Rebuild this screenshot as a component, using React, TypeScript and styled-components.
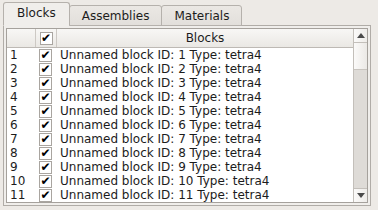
import styled, { createGlobalStyle } from 'styled-components';

const GlobalStyle = createGlobalStyle`
  html, body {
    margin: 0;
    padding: 0;
    background: #edeae6;
  }
  * {
    box-sizing: border-box;
  }
  body {
    font-family: 'DejaVu Sans', 'Liberation Sans', sans-serif;
    font-size: 12px;
    color: #1c1c1c;
  }
`;

const Window = styled.div`
  width: 378px;
  height: 210px;
  padding: 2px 7px 0 3px;
  display: flex;
  flex-direction: column;
  overflow: hidden;
`;

const TabBar = styled.div`
  display: flex;
  align-items: flex-end;
  height: 24px;
  position: relative;
  z-index: 1;
  margin-bottom: -1px;
`;

const Tab = styled.div<{ $active?: boolean }>`
  height: ${(p) => (p.$active ? 24 : 21)}px;
  padding: 0 ${(p) => (p.$active ? 13 : 12)}px;
  margin-right: -1px;
  display: flex;
  align-items: center;
  padding-bottom: ${(p) => (p.$active ? 2 : 0)}px;
  border: 1px solid #b5b1ac;
  border-bottom: ${(p) => (p.$active ? '1px solid #f0eeeb' : '1px solid #b5b1ac')};
  border-radius: 3px 3px 0 0;
  background: ${(p) => (p.$active ? '#f0eeeb' : 'linear-gradient(#ebe8e4, #e2dfdb)')};
  color: #1c1c1c;
`;

const Panel = styled.div`
  height: 181px;
  border: 1px solid #b0aca7;
  background: #f0eeeb;
  padding: 2px;
`;

const TableFrame = styled.div`
  height: 100%;
  border: 1px solid #a5a19c;
  background: #fff;
  display: flex;
  overflow: hidden;
`;

const TableArea = styled.div`
  flex: 1;
  display: flex;
  flex-direction: column;
  overflow: hidden;
`;

const HeaderRow = styled.div`
  height: 19px;
  flex-shrink: 0;
  display: grid;
  grid-template-columns: 29px 21px 1fr;
  border-bottom: 1px solid #bdb9b4;
  background: linear-gradient(#f8f7f5, #eae8e4);
`;

const HeaderCell = styled.div<{ $center?: boolean }>`
  display: flex;
  align-items: center;
  justify-content: ${(p) => (p.$center ? 'center' : 'flex-start')};
  border-right: 1px solid #cdc9c4;
  &:last-child {
    border-right: none;
  }
`;

const Body = styled.div`
  flex: 1;
  overflow: hidden;
`;

const Row = styled.div`
  height: 14px;
  display: grid;
  grid-template-columns: 32px 18px 1fr;
  align-items: center;
  line-height: 14px;
`;

const RowNumber = styled.div`
  padding-left: 3px;
`;

const Check = styled.div`
  width: 13px;
  height: 13px;
  border: 1px solid #a9a5a0;
  background: #fff;
  display: flex;
  align-items: center;
  justify-content: center;
  font-size: 12px;
  font-weight: bold;
  line-height: 1;
  color: #000;
`;

const BlockName = styled.div`
  padding-left: 3px;
  white-space: nowrap;
`;

const ScrollBar = styled.div`
  width: 14px;
  flex-shrink: 0;
  border-left: 1px solid #c3bfba;
  background: #dedbd7;
  display: flex;
  flex-direction: column;
`;

const ArrowButton = styled.div<{ $down?: boolean }>`
  height: 14px;
  flex-shrink: 0;
  background: linear-gradient(to right, #fbfaf9, #eeece9);
  border-top: ${(p) => (p.$down ? '1px solid #c3bfba' : 'none')};
  border-bottom: ${(p) => (p.$down ? 'none' : '1px solid #c3bfba')};
  display: flex;
  align-items: center;
  justify-content: center;
`;

const Thumb = styled.div`
  height: 27px;
  flex-shrink: 0;
  background: linear-gradient(to right, #fbfaf9, #ebe9e6);
  border-bottom: 1px solid #c8c4bf;
`;

const Trough = styled.div`
  flex: 1;
`;

const Arrow = ({ down }: { down?: boolean }) => (
  <svg width="8" height="5" viewBox="0 0 8 5">
    <path d={down ? 'M0 0H8L4 5Z' : 'M0 5H8L4 0Z'} fill="#4a4a4a" />
  </svg>
);

const blocks = Array.from({ length: 12 }, (_, i) => i + 1);

export default function App() {
  return (
    <>
      <GlobalStyle />
      <Window>
        <TabBar>
          <Tab $active>Blocks</Tab>
          <Tab>Assemblies</Tab>
          <Tab>Materials</Tab>
        </TabBar>
        <Panel>
          <TableFrame>
            <TableArea>
              <HeaderRow>
                <HeaderCell />
                <HeaderCell $center>
                  <Check>✔</Check>
                </HeaderCell>
                <HeaderCell $center>Blocks</HeaderCell>
              </HeaderRow>
              <Body>
                {blocks.map((id) => (
                  <Row key={id}>
                    <RowNumber>{id}</RowNumber>
                    <Check>✔</Check>
                    <BlockName>Unnamed block ID: {id} Type: tetra4</BlockName>
                  </Row>
                ))}
              </Body>
            </TableArea>
            <ScrollBar>
              <ArrowButton>
                <Arrow />
              </ArrowButton>
              <Thumb />
              <Trough />
              <ArrowButton $down>
                <Arrow down />
              </ArrowButton>
            </ScrollBar>
          </TableFrame>
        </Panel>
      </Window>
    </>
  );
}
